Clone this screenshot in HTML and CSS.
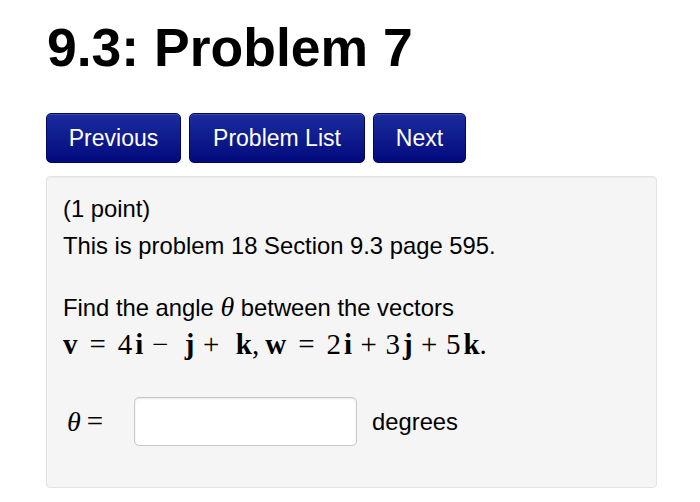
FILE: index.html
```html
<!DOCTYPE html>
<html lang="en">
<head>
    <meta charset="UTF-8">
    <title>9.3: Problem 7</title>
    <link rel="stylesheet" href="styles.css">
</head>
<body>
    <div class="page">
        <h1>9.3: Problem 7</h1>

        <!-- navegação entre problemas -->
        <div class="nav-buttons">
            <button class="nav-btn">Previous</button>
            <button class="nav-btn">Problem List</button>
            <button class="nav-btn">Next</button>
        </div>

        <div class="problem">
            <p class="line">(1 point)</p>
            <p class="line">This is problem 18 Section 9.3 page 595.</p>

            <p class="line question">Find the angle <span class="mi">&theta;</span> between the vectors</p>
            <p class="line math">
                <b>v</b><span class="rel">=</span>4<b class="vec">i</b><span class="bin">&minus;</span><span class="gap"></span><b>j</b><span class="bin">+</span><span class="gap"></span><b>k</b>,<span class="sp"></span><b>w</b><span class="rel">=</span>2<b class="vec">i</b><span class="bin">+</span>3<b class="vec">j</b><span class="bin">+</span>5<b class="vec">k</b>.
            </p>

            <div class="answer">
                <span class="math label"><span class="mi">&theta;</span><span class="rel">=</span></span>
                <input type="text" class="answer-input">
                <span class="unit">degrees</span>
            </div>
        </div>
    </div>
</body>
</html>
```

FILE: styles.css
```css
body {
    font-family: "Liberation Sans", Arial, sans-serif;
    background-color: #ffffff;
    color: #000;
    margin: 0;
}
.page {
    width: 611px;
    padding: 18px 0 0 46px;
}
h1 {
    font-size: 53.5px;
    line-height: 60px;
    font-weight: bold;
    margin: 0 0 35px 1px;
}
.nav-buttons {
    display: flex;
    gap: 8px;
    margin-bottom: 13px;
}
.nav-btn {
    height: 50px;
    padding: 0 20px;
    font-family: "Liberation Sans", Arial, sans-serif;
    font-size: 23px;
    color: white;
    background: linear-gradient(#1b2d9e, #020a7c);
    border: 1px solid #01075f;
    border-radius: 5px;
    box-shadow: inset 0 1px 0 rgba(255,255,255,0.15);
    cursor: pointer;
}
.nav-btn:first-child {
    width: 135px;
}
.nav-btn:nth-child(2) {
    width: 176px;
}
.nav-btn:nth-child(3) {
    width: 93px;
}
.problem {
    background-color: #f5f5f5;
    border: 1px solid #e3e3e3;
    border-radius: 4px;
    padding: 13px 16px 41px 16px;
    box-shadow: inset 0 1px 1px rgba(0,0,0,0.04);
}
.line {
    font-size: 23.8px;
    line-height: 37px;
    margin: 0;
}
.question {
    margin-top: 25px;
    line-height: 36px;
}
.math {
    font-family: "Liberation Serif", "Times New Roman", serif;
    font-size: 29px;
    line-height: 36px;
    white-space: nowrap;
}
.math b {
    font-weight: bold;
}
.mi {
    font-family: "Liberation Serif", "Times New Roman", serif;
    font-style: italic;
    font-size: 28px;
}
.rel {
    margin: 0 12px;
}
.bin {
    margin: 0 8.5px;
}
.vec {
    margin-left: 3px;
}
.gap {
    display: inline-block;
    width: 8px;
}
.sp {
    display: inline-block;
    width: 6px;
}
.answer {
    display: flex;
    align-items: center;
    margin-top: 35px;
}
.label {
    width: 67px;
    padding-left: 4px;
}
.label .rel {
    margin: 0 0 0 6px;
}
.answer-input {
    width: 223px;
    height: 49px;
    box-sizing: border-box;
    border: 1px solid #c8c8c8;
    border-radius: 5px;
    background: white;
    box-shadow: inset 0 1px 2px rgba(0,0,0,0.1);
    margin: 0;
}
.unit {
    font-size: 23.8px;
    margin-left: 15px;
}
```
